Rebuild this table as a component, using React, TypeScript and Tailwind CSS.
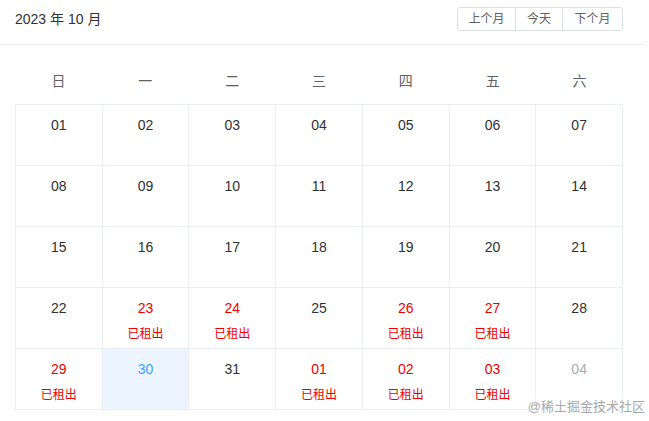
const weekDays = ['日', '一', '二', '三', '四', '五', '六'];

type Day = { n: string; rented?: boolean; today?: boolean; other?: boolean };

const days: Day[] = [
  { n: '01' }, { n: '02' }, { n: '03' }, { n: '04' }, { n: '05' }, { n: '06' }, { n: '07' },
  { n: '08' }, { n: '09' }, { n: '10' }, { n: '11' }, { n: '12' }, { n: '13' }, { n: '14' },
  { n: '15' }, { n: '16' }, { n: '17' }, { n: '18' }, { n: '19' }, { n: '20' }, { n: '21' },
  { n: '22' }, { n: '23', rented: true }, { n: '24', rented: true }, { n: '25' },
  { n: '26', rented: true }, { n: '27', rented: true }, { n: '28' },
  { n: '29', rented: true }, { n: '30', today: true }, { n: '31' },
  { n: '01', rented: true, other: true }, { n: '02', rented: true, other: true },
  { n: '03', rented: true, other: true }, { n: '04', other: true },
];

const font = { fontFamily: '"Liberation Sans", "Noto Sans CJK SC", sans-serif' };

const App = () => {
  return (
    <div className="relative w-[649px] h-[421px] bg-white text-[#303133]" style={font}>
      {/* header */}
      <div className="flex items-center justify-between h-[45px] mr-[4px] pl-[15px] pr-[22px] border-b border-[#ebeef5]">
        <div className="text-[14px] leading-5 -mt-[6px]">2023 年 10 月</div>
        <div className="flex -mt-[7px] h-[24px] border border-[#dcdfe6] rounded-[3px] text-[12px] text-[#606266]">
          <button className="w-[58px] border-r border-[#dcdfe6]">上个月</button>
          <button className="w-[47px] border-r border-[#dcdfe6]">今天</button>
          <button className="w-[59px]">下个月</button>
        </div>
      </div>

      <div className="pl-[15px] pr-[26px]">
        {/* week days */}
        <div className="grid grid-cols-7 pt-[26px] pb-[13px] text-[14px] leading-5 text-[#606266]">
          {weekDays.map((w) => (
            <div key={w} className="text-center">{w}</div>
          ))}
        </div>

        {/* days */}
        <div className="grid grid-cols-7 border-l border-t border-[#ebeef5]">
          {days.map((d, i) => {
            let color = 'text-[#303133]';
            if (d.today) color = 'text-[#409eff]';
            else if (d.rented) color = 'text-[#ee0000]';
            else if (d.other) color = 'text-[#aaaaaa]';
            return (
              <div
                key={i}
                className={`h-[61px] border-r border-b border-[#ebeef5] flex flex-col items-center pt-[10px] ${d.today ? 'bg-[#ecf5ff]' : ''}`}
              >
                <div className={`text-[14px] leading-5 ${color}`}>{d.n}</div>
                {d.rented && (
                  <div className="mt-[6px] text-[12px] leading-5 text-[#ee0000]">已租出</div>
                )}
              </div>
            );
          })}
        </div>
      </div>

      <div className="absolute right-[4px] bottom-[4px] text-[13px] leading-5 text-[#a8a8a8] bg-white/60">
        @稀土掘金技术社区
      </div>
    </div>
  );
};

export default App;
